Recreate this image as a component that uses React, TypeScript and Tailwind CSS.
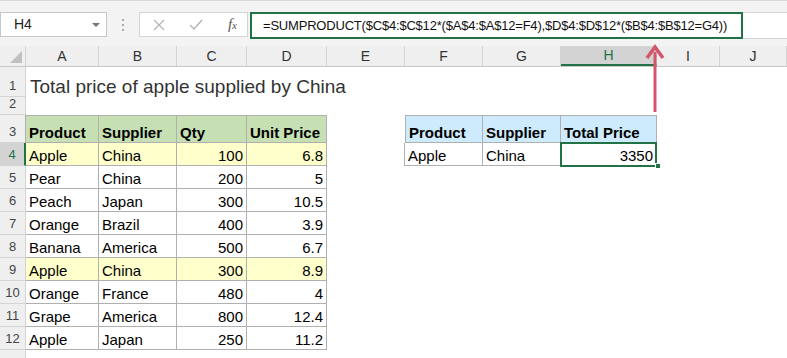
import React from 'react'

const cols = [
   { key: 'A', w: 'w-[73px]' },
   { key: 'B', w: 'w-[78px]' },
   { key: 'C', w: 'w-[70px]' },
   { key: 'D', w: 'w-[80px]' },
   { key: 'E', w: 'w-[78px]' },
   { key: 'F', w: 'w-[78px]' },
   { key: 'G', w: 'w-[78px]' },
   { key: 'H', w: 'w-[96px]' },
   { key: 'I', w: 'w-[63px]' },
   { key: 'J', w: 'w-[67px]' },
]

const data = [
   ['Apple', 'China', '100', '6.8', true],
   ['Pear', 'China', '200', '5', false],
   ['Peach', 'Japan', '300', '10.5', false],
   ['Orange', 'Brazil', '400', '3.9', false],
   ['Banana', 'America', '500', '6.7', false],
   ['Apple', 'China', '300', '8.9', true],
   ['Orange', 'France', '480', '4', false],
   ['Grape', 'America', '800', '12.4', false],
   ['Apple', 'Japan', '250', '11.2', false],
] as const

const font = { fontFamily: '"Liberation Sans", Arial, sans-serif' }

const RowHead = ({ n, active = false }: { n: number; active?: boolean }) => (
   <div
      className={`w-[26px] shrink-0 h-full flex items-end justify-center pb-[2px] text-[13px] leading-none border-r border-b border-[#d4d4d4] ${
         active ? 'bg-[#d3d3d3] text-[#217346] border-r-2 border-r-[#217346]' : 'bg-[#efefef] text-[#444]'
      }`}
   >
      <span className="pb-[2px]">{n}</span>
   </div>
)

const Cell = ({
   w,
   children,
   bg = '',
   right = false,
   bold = false,
}: {
   w: string
   children?: React.ReactNode
   bg?: string
   right?: boolean
   bold?: boolean
}) => (
   <div
      className={`${w} shrink-0 h-full flex items-end px-[3px] pb-[2px] text-[15px] text-black leading-none border-r border-b border-[#b0b0b0] ${bg} ${
         right ? 'justify-end' : ''
      } ${bold ? 'font-bold' : ''}`}
   >
      {children}
   </div>
)

export default function App() {
   return (
      <div className="relative w-[787px] h-[358px] overflow-hidden bg-white" style={font}>
         {/* formula bar */}
         <div className="h-[46px] bg-[#f3f3f3] border-t border-[#d8d8d8] flex items-start pt-[11px]">
            <div className="w-[107px] h-[25px] bg-white border border-[#c6c6c6] flex items-center justify-between pl-[13px] pr-[6px] text-[14px] text-[#222]">
               <span>H4</span>
               <span className="w-0 h-0 border-l-[4px] border-r-[4px] border-t-[4px] border-l-transparent border-r-transparent border-t-[#777]" />
            </div>
            <div className="w-[32px] h-[25px] flex flex-col items-center justify-center gap-[3px]">
               <span className="w-[2px] h-[2px] bg-[#aaa]" />
               <span className="w-[2px] h-[2px] bg-[#aaa]" />
               <span className="w-[2px] h-[2px] bg-[#aaa]" />
            </div>
            <div className="w-[109px] h-[25px] bg-white border border-[#d4d4d4] flex items-center pl-[13px] pr-[10px] justify-between">
               <svg width="12" height="12" viewBox="0 0 12 12">
                  <path d="M1 1 L11 11 M11 1 L1 11" stroke="#b5b5b5" strokeWidth="1.3" fill="none" />
               </svg>
               <svg width="14" height="12" viewBox="0 0 14 12">
                  <path d="M1 6 L5 10 L13 1" stroke="#b5b5b5" strokeWidth="1.5" fill="none" />
               </svg>
               <span className="text-[15px] italic text-[#555]" style={{ fontFamily: '"Liberation Serif", serif' }}>
                  f<span className="text-[11px]">x</span>
               </span>
            </div>
            <div className="ml-[2px] w-[493px] h-[27px] bg-white border-2 border-[#217346] flex items-center pl-[11px] text-[13px] tracking-[-0.2px] text-[#111] whitespace-nowrap">
               =SUMPRODUCT($C$4:$C$12*($A$4:$A$12=F4),$D$4:$D$12*($B$4:$B$12=G4))
            </div>
            <div className="flex-1 h-[27px] bg-white border-y border-[#d4d4d4]" />
         </div>

         {/* column headers */}
         <div className="h-[21px] flex bg-[#efefef] border-b border-[#c8c8c8]">
            <div className="w-[26px] shrink-0 h-full border-r border-[#d4d4d4] flex items-end justify-end p-[3px]">
               <svg width="12" height="12" viewBox="0 0 12 12">
                  <path d="M12 0 L12 12 L0 12 Z" fill="#c0c0c0" />
               </svg>
            </div>
            {cols.map((c) => (
               <div
                  key={c.key}
                  className={`${c.w} shrink-0 h-full flex items-center justify-center text-[14px] border-r border-[#d4d4d4] ${
                     c.key === 'H' ? 'bg-[#d3d3d3] text-[#217346] border-b-2 border-b-[#217346]' : 'text-[#333]'
                  }`}
               >
                  {c.key}
               </div>
            ))}
         </div>

         {/* row 1 */}
         <div className="h-[30px] flex">
            <RowHead n={1} />
            <div className="flex-1 flex items-end pl-[4px] pb-[1px] text-[19px] text-[#333] leading-none">
               Total price of apple supplied by China
            </div>
         </div>
         {/* row 2 */}
         <div className="h-[18px] flex">
            <RowHead n={2} />
         </div>
         {/* row 3 */}
         <div className="h-[28px] flex">
            <RowHead n={3} />
            <div className="flex border-t border-l border-[#b0b0b0] -ml-px">
               <Cell w="w-[73px]" bg="bg-[#c6e0b4]" bold>Product</Cell>
               <Cell w="w-[78px]" bg="bg-[#c6e0b4]" bold>Supplier</Cell>
               <Cell w="w-[70px]" bg="bg-[#c6e0b4]" bold>Qty</Cell>
               <Cell w="w-[80px]" bg="bg-[#c6e0b4]" bold>Unit Price</Cell>
            </div>
            <div className="w-[78px]" />
            <div className="flex border-t border-l border-[#b0b0b0]">
               <Cell w="w-[77px]" bg="bg-[#cdebfc]" bold>Product</Cell>
               <Cell w="w-[78px]" bg="bg-[#cdebfc]" bold>Supplier</Cell>
               <Cell w="w-[96px]" bg="bg-[#cdebfc]" bold>Total Price</Cell>
            </div>
         </div>

         {data.map(([p, s, q, u, hl], i) => (
            <div key={i} className="h-[23px] flex">
               <RowHead n={i + 4} active={i === 0} />
               <Cell w="w-[73px]" bg={hl ? 'bg-[#ffffcc]' : ''}>{p}</Cell>
               <Cell w="w-[78px]" bg={hl ? 'bg-[#ffffcc]' : ''}>{s}</Cell>
               <Cell w="w-[70px]" bg={hl ? 'bg-[#ffffcc]' : ''} right>{q}</Cell>
               <Cell w="w-[80px]" bg={hl ? 'bg-[#ffffcc]' : ''} right>{u}</Cell>
               {i === 0 && (
                  <>
                     <div className="w-[78px] shrink-0 border-r border-[#b0b0b0]" />
                     <Cell w="w-[78px]">Apple</Cell>
                     <Cell w="w-[78px]">China</Cell>
                     <div className="w-[96px] shrink-0 h-full relative">
                        <div className="absolute -left-px -top-px w-[97px] h-[25px] border-2 border-[#217346] flex items-end justify-end pr-[2px] pb-[2px] text-[15px] leading-none">
                           3350
                        </div>
                        <span className="absolute right-[-4px] bottom-[-3px] w-[6px] h-[6px] bg-[#217346] border border-white" />
                     </div>
                  </>
               )}
            </div>
         ))}

         <div className="h-[10px] flex overflow-hidden">
            <div className="w-[26px] shrink-0 h-full bg-[#efefef] border-r border-[#d4d4d4]" />
         </div>

         {/* arrow pointing to formula */}
         <svg className="absolute left-[645px] top-[44px]" width="20" height="70" viewBox="0 0 20 70">
            <path d="M10 8 L10 68" stroke="#d4566b" strokeWidth="3" />
            <path d="M2 14 L10 3 L18 14" stroke="#d4566b" strokeWidth="3.5" fill="none" />
         </svg>
      </div>
   )
}
